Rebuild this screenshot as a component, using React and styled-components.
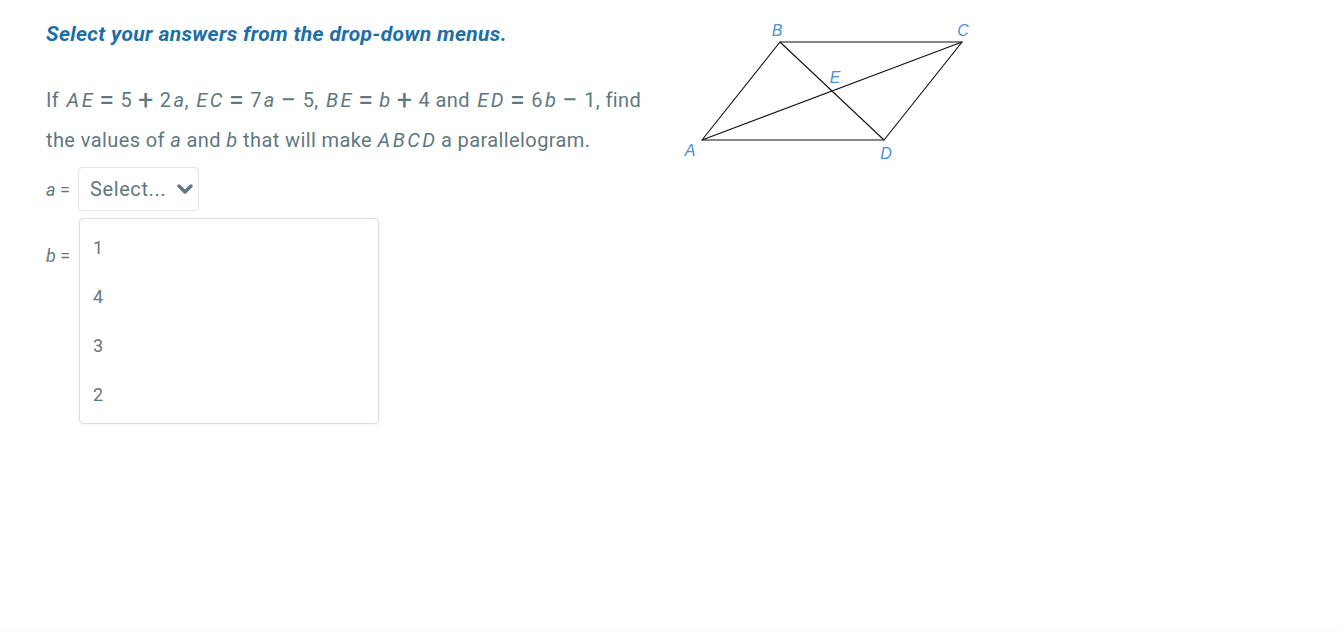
import styled, { createGlobalStyle } from "styled-components";

const GlobalStyle = createGlobalStyle`
  html, body {
    margin: 0;
    padding: 0;
    background: #ffffff;
  }
  body {
    font-family: Roboto, "Noto Sans", sans-serif;
  }
`;

const Page = styled.div`
  min-height: 632px;
  box-sizing: border-box;
  padding: 20px 0 0 46px;
  display: flex;
  align-items: flex-start;
  border-bottom: 4px solid #fbfcfc;
`;

const Question = styled.div`
  width: 634px;
  position: relative;
`;

const Heading = styled.h2`
  margin: 0;
  font-size: 21px;
  line-height: 28px;
  font-weight: 700;
  font-style: italic;
  color: #1b6ea8;
  letter-spacing: 0.35px;
  white-space: nowrap;
`;

const Prompt = styled.p`
  margin: 32px 0 0;
  font-size: 20px;
  line-height: 40px;
  color: #5f7882;
  letter-spacing: 0.4px;
  white-space: nowrap;
`;

/* variable inside a typeset expression: spaced out like a math font */
const M = styled.i`
  font-style: italic;
  letter-spacing: 2.5px;
  margin-left: ${(p) => (p.$tight ? 0 : 2)}px;
  margin-right: -2px;
`;

/* variable mentioned in running prose */
const Var = styled.i`
  font-style: italic;
`;

const Op = styled.span`
  display: inline-block;
  font-size: 27px;
  line-height: 20px;
  margin: 0 6px;
  vertical-align: -2px;
`;

const Answers = styled.div`
  margin-top: 7px;
  display: flex;
  flex-direction: column;
  gap: 22px;
`;

const AnswerRow = styled.div`
  display: flex;
  align-items: center;
  gap: 4px;
  color: #5f7882;
  font-size: 18px;
`;

const Label = styled.span`
  width: 28px;
  white-space: nowrap;
`;

const Select = styled.div`
  height: 44px;
  box-sizing: border-box;
  padding: 0 4px 0 11px;
  display: flex;
  align-items: center;
  gap: 10px;
  border: 1px solid #e3e6e7;
  border-radius: 4px;
  font-size: 20px;
  letter-spacing: 0.6px;
  color: #5f7882;
  visibility: ${(p) => (p.$hidden ? "hidden" : "visible")};
`;

const Menu = styled.ul`
  position: absolute;
  left: 33px;
  top: 198px;
  width: 300px;
  margin: 0;
  padding: 4px 0;
  box-sizing: border-box;
  list-style: none;
  background: #fff;
  border: 1px solid #dcdfe0;
  border-radius: 4px;
  box-shadow: 0 1px 4px rgba(0, 0, 0, 0.06);
`;

const Option = styled.li`
  height: 49px;
  display: flex;
  align-items: center;
  padding-left: 13px;
  font-size: 18px;
  color: #5f7882;
`;

const Figure = styled.svg`
  display: block;
  margin-top: -5px;
`;

const Chevron = () => (
  <svg width="18" height="12" viewBox="0 0 18 12">
    <polyline
      points="3,3 9,9 15,3"
      fill="none"
      stroke="#5f7882"
      strokeWidth="3.4"
      strokeLinecap="round"
      strokeLinejoin="round"
    />
  </svg>
);

const Parallelogram = () => (
  <Figure width="310" height="155" viewBox="0 0 310 155">
    <g stroke="#111" strokeWidth="1.1" fill="none">
      <polygon points="22,125 100,27 282,27 204,125" />
      <line x1="22" y1="125" x2="282" y2="27" />
      <line x1="100" y1="27" x2="204" y2="125" />
    </g>
    <g
      fill="#4a90dc"
      fontFamily="'Liberation Sans', Arial, sans-serif"
      fontStyle="italic"
      fontSize="16"
      textAnchor="middle"
    >
      <text x="97" y="21">B</text>
      <text x="283" y="21">C</text>
      <text x="155" y="68">E</text>
      <text x="10" y="141">A</text>
      <text x="206" y="144">D</text>
    </g>
  </Figure>
);

export default function App() {
  return (
    <>
      <GlobalStyle />
      <Page>
        <Question>
          <Heading>Select your answers from the drop-down menus.</Heading>
          <Prompt>
            If <M>AE</M>
            <Op>=</Op>5<Op>+</Op>2<M>a</M>, <M>EC</M>
            <Op>=</Op>7<M>a</M>
            <Op>−</Op>5, <M>BE</M>
            <Op>=</Op>
            <M $tight>b</M>
            <Op>+</Op>4 and <M>ED</M>
            <Op>=</Op>6<M>b</M>
            <Op>−</Op>1, find
            <br />
            the values of <Var>a</Var> and <Var>b</Var> that will make{" "}
            <M $tight>ABCD</M> a parallelogram.
          </Prompt>
          <Answers>
            <AnswerRow>
              <Label>
                <Var>a</Var> =
              </Label>
              <Select>
                Select... <Chevron />
              </Select>
            </AnswerRow>
            <AnswerRow>
              <Label>
                <Var>b</Var> =
              </Label>
              <Select $hidden>
                Select... <Chevron />
              </Select>
            </AnswerRow>
          </Answers>
          <Menu>
            {["1", "4", "3", "2"].map((n) => (
              <Option key={n}>{n}</Option>
            ))}
          </Menu>
        </Question>
        <Parallelogram />
      </Page>
    </>
  );
}
